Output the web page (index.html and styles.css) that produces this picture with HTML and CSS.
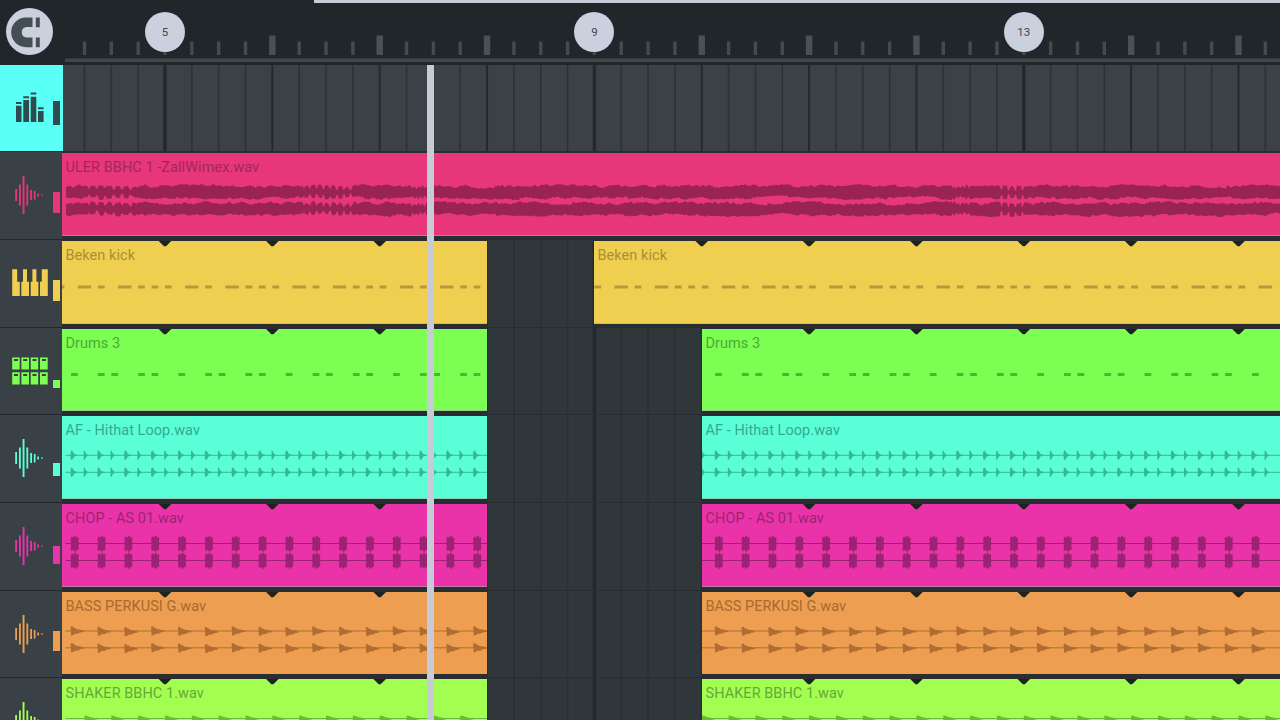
FILE: index.html
```html
<!DOCTYPE html>
<html lang="en">

<head>
    <meta charset="UTF-8">
    <meta name="viewport" content="width=device-width, initial-scale=1.0">
    <title>Playlist</title>
    <link rel="stylesheet" href="styles.css">
</head>

<body>

    <div class="scrollbar"></div>

    <header class="topbar">
        <button class="snap" aria-label="Snap">
            <svg width="47" height="47" viewBox="0 0 47 47">
                <path d="M26.5 9.5H20a14.8 14.8 0 0 0 0 29.7h6.500v-9.700H20a5.300 5.300 0 0 1 0-10.400h6.500zM29.800 9.500h4v9.700h-4zM29.800 29.500h4v9.700h-4z"/>
            </svg>
        </button>
        <div class="ruler" id="ruler"></div>
    </header>

    <main class="tracks" id="tracks">
        <div class="playhead"></div>
    </main>

    <svg class="symbols">
        <symbol id="icon-mixer" viewBox="0 0 36 40">
            <path d="M4 17.7h5.5V34H4zM11.3 12H17v22h-5.7zM18.7 8.7h5.6V34h-5.6zM26 23h5.6v11H26zM4 14h5.5v2H4zM11.3 8.2H17v2h-5.7zM18.7 4.4h5.6v2h-5.6zM26 19.2h5.6v2H26z"/>
        </symbol>
        <symbol id="icon-wave" viewBox="0 0 36 40">
            <path d="M3.2 14H5v12H3.2zM7 9.500h1.800v21H7zM10.600 1h1.900v38h-1.900zM14.400 9.500h1.800v21h-1.800zM18.200 15H20v10h-1.800zM21.800 16h1.700v8.500h-1.700zM25.300 18.500H27v3h-1.700zM29 19.500h2v1h-2z"/>
        </symbol>
        <symbol id="icon-keys" viewBox="0 0 36 40">
            <path d="M.2 6.300h5v12.500h2.600V33H.2zM11 6.300h4v12.500h2V33H9.300V18.800H11zM20.400 6.300h4v12.500h2V33h-7.700V18.800h1.700zM29.800 6.300h6V33H28V18.800h1.800z"/>
        </symbol>
        <symbol id="icon-pads" viewBox="0 0 36 40">
            <path fill-rule="evenodd" d="M.2 6.500h7.500v12H.2zM2 8v2h4V8zM9.400 6.500H17v12H9.400zM11.200 8v2h4V8zM18.700 6.500h7.500v12h-7.500zM20.500 8v2h4V8zM28 6.500h7.700v12H28zM29.900 8v2h4V8zM.2 21.300h7.500v12.200H.2zM2 23v2h4v-2zM9.400 21.300H17v12.200H9.400zM11.200 23v2h4v-2zM18.700 21.300h7.500v12.200h-7.500zM20.500 23v2h4v-2zM28 21.300h7.700v12.200H28zM29.900 23v2h4v-2z"/>
        </symbol>
    </svg>

    <script src="script.js"></script>

</body>

</html>
```
FILE: styles.css
```css
body {
    margin: 0;
    width: 1280px;
    height: 720px;
    overflow: hidden;
    position: relative;
    background-color: #20272a;
    font-family: Roboto, sans-serif;
}

.symbols {
    display: none;
}

/* Top bar */
.scrollbar {
    position: absolute;
    top: 0;
    right: 0;
    width: 966px;
    height: 3px;
    background-color: #c5ccd8;
}

.topbar {
    display: flex;
    height: 65px;
}

.snap {
    width: 47px;
    height: 47px;
    margin: 8px 11px 0 6px;
    padding: 0;
    border: none;
    border-radius: 50%;
    background-color: #cad0dd;
    flex: none;
}

.snap svg {
    display: block;
    fill: #454d55;
}

.ruler {
    position: relative;
    flex: 1;
    margin-left: -2px;
}

.ruler svg {
    display: block;
}

.bar-number {
    position: absolute;
    top: 12px;
    width: 40px;
    height: 40px;
    margin-left: -20px;
    border-radius: 50%;
    background-color: #cad0dd;
    color: #3f464e;
    font-size: 11.5px;
    line-height: 40px;
    text-align: center;
}

/* Tracks */
.tracks {
    position: relative;
    height: 655px;
    overflow: hidden;
}

.track {
    display: flex;
    height: 88px;
}

.track.mixer {
    height: 86px;
}

.track.short {
    height: 87px;
}

.head {
    display: flex;
    flex: none;
    align-items: flex-start;
    gap: 5px;
    width: 62px;
    padding: 23px 0 0 12px;
    box-sizing: border-box;
    background-color: #3a4146;
    border-top: 1px solid #23292d;
    color: var(--color);
}

.head svg {
    width: 36px;
    height: 40px;
    flex: none;
    fill: currentColor;
}

.meter {
    width: 7px;
    align-self: flex-end;
    margin-bottom: 26px;
    background-color: currentColor;
}

.mixer .head {
    width: 63px;
    margin-right: -1px;
    border-top: none;
    background-color: #5afff5;
    color: #2f4b50;
    z-index: 1;
}

.lane {
    position: relative;
    display: flex;
    flex: 1;
    min-width: 0;
    overflow: hidden;
    box-sizing: border-box;
    background-color: #30373b;
    border-top: 1px solid #262c30;
}

.mixer .lane {
    background-color: #3a4247;
    border-top: none;
}

.grid {
    position: absolute;
    top: 0;
    left: 0;
}

.clip {
    position: relative;
    flex: none;
    margin: 1px 0 3px;
    overflow: hidden;
    box-sizing: border-box;
    background-color: var(--color);
    border-bottom: 1px solid rgba(170, 170, 170, 0.6);
    box-shadow: 0 -1px #2b2e31, 0 3px #2b2e31;
}

.clip svg {
    position: absolute;
    top: 0;
    left: 0;
    fill: var(--ink);
    stroke: none;
}

.clip .notch {
    fill: #1d2420;
}

.clip-name {
    position: relative;
    padding: 6px 0 0 3.5px;
    color: var(--label);
    font-size: 14.5px;
    letter-spacing: 0.05px;
    line-height: 18px;
    white-space: nowrap;
}

.playhead {
    position: absolute;
    z-index: 2;
    top: 0;
    left: 427px;
    width: 7px;
    height: 655px;
    background-color: #c6cbd6;
}
```
FILE: script.js
```js
const LANE_X = 62;          // left edge of the lanes
const BAR = 107.35;         // width of one bar
const BEAT = BAR / 4;
const FIRST_BAR = 165 - BAR; // x of bar 4
const WIDTH = 1280;

const tracks = [
    { name: "ULER BBHC 1 -ZallWimex.wav", icon: "wave", color: "#e8367a", ink: "#992453", label: "#a0285a", meter: 21, type: "song", clips: [[62, 1280]] },
    { name: "Beken kick", icon: "keys", color: "#f0ce50", ink: "#b59a3d", label: "#a98e38", meter: 21, type: "kick", notches: true, clips: [[62, 487], [594, 1280]] },
    { name: "Drums 3", icon: "pads", color: "#7cff52", ink: "#45ba2d", label: "#4ca835", meter: 8, type: "drums", notches: true, short: true, clips: [[62, 487], [702, 1280]] },
    { name: "AF - Hithat Loop.wav", icon: "wave", color: "#5affd8", ink: "#35b898", label: "#37a88f", meter: 13, type: "hat", clips: [[62, 487], [702, 1280]] },
    { name: "CHOP - AS 01.wav", icon: "wave", color: "#ea33a8", ink: "#9c2373", label: "#9c2473", meter: 18, type: "chop", notches: true, clips: [[62, 487], [702, 1280]] },
    { name: "BASS PERKUSI G.wav", icon: "wave", color: "#ed9e50", ink: "#b16d31", label: "#a66a33", meter: 20, type: "bass", notches: true, short: true, clips: [[62, 487], [702, 1280]] },
    { name: "SHAKER BBHC 1.wav", icon: "wave", color: "#a2ff52", ink: "#6cb837", label: "#66a836", meter: 0, type: "shaker", notches: true, clips: [[62, 487], [702, 1280]] }
];

function rect(x, y, w, h, attrs) {
    return `<rect x="${x.toFixed(2)}" y="${y}" width="${w}" height="${h}" ${attrs || ""}/>`;
}

// vertical grid lines of one lane
function grid(strong) {
    let out = "";
    for (let i = 1; FIRST_BAR + i * BEAT < WIDTH; i++) {
        const x = FIRST_BAR + i * BEAT - LANE_X;
        let w = 1.6, c = strong ? "#2b3236" : "#2a3034";
        if (i % 4 === 0) { w = 2; c = strong ? "#23292d" : "#282e32"; }
        if (i % 16 === 4) { w = 3.4; c = "#22282c"; }
        out += rect(x - w / 2, 0, w, 88, `fill="${c}"`);
    }
    return `<svg class="grid" width="1218" height="88">${out}</svg>`;
}

function drawRuler() {
    let out = rect(3, 58.5, 1218, 3.5, 'fill="#3f474b"');
    for (let i = 1; FIRST_BAR + i * BEAT < WIDTH; i++) {
        const x = FIRST_BAR + i * BEAT - LANE_X;
        out += i % 4 === 0 && i % 16 !== 4
            ? rect(x - 3.2, 35.5, 6.4, 19.5, 'fill="#495156"')
            : rect(x - 1.7, 41.5, 3.4, 13.5, 'fill="#434b50"');
    }
    let html = `<svg width="1218" height="65">${out}</svg>`;
    [5, 9, 13].forEach(n => {
        const x = 165 + (n - 5) * BAR - LANE_X;
        html += `<span class="bar-number" style="left: ${x}px">${n}</span>`;
    });
    document.getElementById("ruler").innerHTML = html;
}

// noise with a fixed seed, so the waveform is always the same
function makeNoise(seed) {
    return () => {
        seed = (seed * 16807) % 2147483647;
        return seed / 2147483647;
    };
}

function songWave(cy, seed) {
    const rnd = makeNoise(seed);
    const top = [], bottom = [];
    let a = 0, b = 0;
    for (let x = 66; x <= WIDTH; x += 1) {
        if (x % 3 === 0) a = a * 0.6 + (rnd() - 0.5) * 2.4;
        if (x % 4 === 0) b = b * 0.6 + (rnd() - 0.5) * 2.4;
        let slow = Math.sin(x / 19 + seed) * 0.4;
        let up = 5.4 + slow + a + rnd() * 1.2;
        let down = 5.4 - slow + b + rnd() * 1.2;
        let dip = 0;
        if (x > 88 && x < 138) dip = Math.max(0, Math.cos((x - 88.5) * Math.PI * 2 / 8.4)) * 3.5;
        if (x > 303 && x < 355) dip = Math.max(0, Math.cos((x - 303) * Math.PI * 2 / 6.8)) * 4;
        if ((x > 409 && x < 430) || (x > 952 && x < 972)) dip = x % 4 < 2 ? 2 : 0;
        if (x > 1000 && x < 1024) dip = x % 7 < 2 ? 4 : 0;
        top.push(`${x - LANE_X} ${(cy - Math.min(7.8, Math.max(1.5, up - dip))).toFixed(1)}`);
        bottom.unshift(`${x - LANE_X} ${(cy + Math.min(8, Math.max(1.5, down - dip))).toFixed(1)}`);
    }
    return `<path d="M${top.concat(bottom).join("L")}z"/>`;
}

// one hit of an audio loop, x is its left edge
function hit(type, x, cy, i) {
    if (type === "hat") {
        return i % 2
            ? `<path d="M${x - 0.5} ${cy - 3}l1-2 1.500 1.500 1 2 3.500 1.500-3.500 1.500-1 2-1.500 1.500-1-2z"/>`
            : `<path d="M${x - 0.8} ${cy - 4.5}h1.300l.5 2 2.500 2.500-2.500 2.500-.5 2h-1.300z"/>`;
    }
    if (type === "chop") {
        return `<path d="M${x} ${cy - 4}l.7-2.500 1.800-.5.700 1.500 1-2.500 1.300.5.700 2 1.300-1.200.8 2.200-.6 2 .8 2.500-.8 2.500.6 2-1 2.500-1.200-.5-1 1.800-1.300-.3-1-2-1 1.500-1.300-.5-.5-2.500.6-2.500-.9-2 .8-2z"/>`;
    }
    if (type === "bass") {
        const a = 4.2 - (i % 3) * 0.4;
        return `<path d="M${x} ${cy - a}l2-.5 1 1.500 1.500.2 1.500 1.200 3 .3 4.500 1.300v1l-4 .6-2 1.200-3.500.3-1 1-2.500.8z"/>`;
    }
    return `<path d="M${x} ${cy - 3}l3 .4 2 1 4 .8 4 .8v.8l-4 .6-5 1-4 .8z"/>`;
}

function pattern(track, from, to) {
    const left = Math.max(from, 65.5) - from;
    let out = "";
    if (track.type === "song") {
        return songWave(39, 17) + songWave(56, 91);
    }
    if (track.type === "kick" || track.type === "drums") {
        const notes = track.type === "kick"
            ? [[0, 1], [3, 2], [6, 1], [9, 2], [12, 1], [14, 1]]
            : [[2, 1], [6, 1], [8, 1], [12, 1], [14, 1]];
        for (let bar = FIRST_BAR; bar < WIDTH; bar += BAR) {
            notes.forEach(([step, len]) => {
                const x = bar + step * BAR / 16;
                if (x + 7 > from && x < to - 2) {
                    out += rect(x - from, track.type === "kick" ? 44.5 : 44, len * BAR / 16, 3);
                }
            });
        }
        return out;
    }
    const lines = { hat: [39.3, 56.3], chop: [39.5, 56.5], bass: [39, 55.8], shaker: [39.5, 56] }[track.type];
    const step = track.type === "hat" ? BEAT / 2 : BEAT;
    const start = FIRST_BAR + (track.type === "hat" || track.type === "shaker" ? 0 : BEAT / 2 - 0.5);
    lines.forEach(cy => {
        out += rect(left, cy - 0.5, to - from, 1);
        for (let i = 0, x = start; x < to; i++, x = start + i * step) {
            if (x > from - 2 && x < to - 2) {
                out += hit(track.type, +(x - from).toFixed(2), cy, i);
            }
        }
    });
    return out;
}

function notches(from, to) {
    let out = "";
    for (let x = FIRST_BAR; x < to; x += BAR) {
        if (x > from + 10 && x < to - 10) {
            out += `<path class="notch" d="M${(x - from - 6.3).toFixed(2)} 0h12.600l-5.300 5.300h-2z"/>`;
        }
    }
    return out;
}

function clips(track) {
    let end = LANE_X;
    return track.clips.map(([from, to]) => {
        const gap = from - end;
        end = to;
        return `<div class="clip" style="width: ${to - from}px; margin-left: ${gap}px">
            <svg width="${to - from}" height="83">${pattern(track, from, to)}${track.notches ? notches(from, to) : ""}</svg>
            <div class="clip-name">${track.name}</div>
        </div>`;
    }).join("");
}

function drawTracks() {
    let html = `<div class="track mixer">
        <div class="head"><svg><use href="#icon-mixer"/></svg><span class="meter" style="height: 24px"></span></div>
        <div class="lane">${grid(true)}</div>
    </div>`;
    tracks.forEach(t => {
        html += `<div class="track ${t.short ? "short" : ""}" style="--color: ${t.color}; --ink: ${t.ink}; --label: ${t.label}">
            <div class="head"><svg><use href="#icon-${t.icon}"/></svg><span class="meter" style="height: ${t.meter}px"></span></div>
            <div class="lane">${grid(false)}${clips(t)}</div>
        </div>`;
    });
    document.getElementById("tracks").insertAdjacentHTML("afterbegin", html);
}

drawRuler();
drawTracks();
```
